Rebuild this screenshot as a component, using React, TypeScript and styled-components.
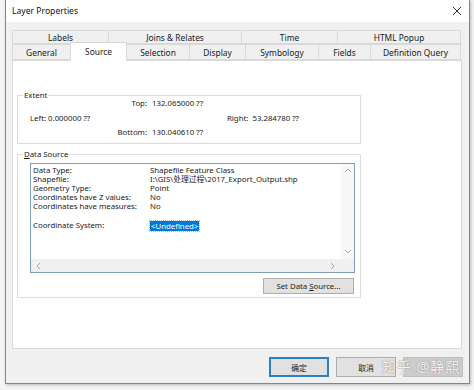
import styled, { createGlobalStyle } from "styled-components";

const GlobalStyle = createGlobalStyle`
  html, body {
    margin: 0;
    padding: 0;
    background: #f5f5f5;
  }
  body {
    font-family: "Noto Sans", "Noto Sans CJK SC", sans-serif;
    font-size: 7.8px;
    color: #1a1a1a;
  }
`;

interface TabDef {
  label: string;
  width: number;
  active?: boolean;
}

const topTabs: TabDef[] = [
  { label: "Labels", width: 97 },
  { label: "Joins & Relates", width: 134 },
  { label: "Time", width: 97 },
  { label: "HTML Popup", width: 124 },
];

const bottomTabs: TabDef[] = [
  { label: "General", width: 59 },
  { label: "Source", width: 57, active: true },
  { label: "Selection", width: 64 },
  { label: "Display", width: 57 },
  { label: "Symbology", width: 74 },
  { label: "Fields", width: 53 },
  { label: "Definition Query", width: 91 },
];

const sourceRows = [
  ["Data Type:", "Shapefile Feature Class"],
  ["Shapefile:", "I:\\GIS\\处理过程\\2017_Export_Output.shp"],
  ["Geometry Type:", "Point"],
  ["Coordinates have Z values:", "No"],
  ["Coordinates have measures:", "No"],
];

const Chevron = ({ dir }: { dir: "up" | "down" | "left" | "right" }) => {
  const d = {
    up: "M1 5 L4 2 L7 5",
    down: "M1 2 L4 5 L7 2",
    left: "M5 1 L2 4 L5 7",
    right: "M2 1 L5 4 L2 7",
  }[dir];
  return (
    <svg width="8" height="8" viewBox="0 0 8 8">
      <path d={d} fill="none" stroke="#a6a6a6" strokeWidth="1" />
    </svg>
  );
};

const App = () => {
  return (
    <Screen>
      <GlobalStyle />
      <Window>
        <TitleBar>
          <Title>Layer Properties</Title>
          <CloseIcon width="10" height="10" viewBox="0 0 10 10">
            <path d="M1 1 L9 9 M9 1 L1 9" stroke="#333" strokeWidth="1" />
          </CloseIcon>
        </TitleBar>
        <Body>
          <TabStrip>
            <TabRow $height={14}>
              {topTabs.map((t) => (
                <Tab key={t.label} $width={t.width}>
                  {t.label}
                </Tab>
              ))}
            </TabRow>
            <TabRow $height={16}>
              {bottomTabs.map((t) => (
                <Tab key={t.label} $width={t.width} $active={t.active}>
                  {t.label}
                </Tab>
              ))}
            </TabRow>
          </TabStrip>
          <Panel>
            <ExtentBox>
              <GroupLabel>Extent</GroupLabel>
              <ExtentGrid>
                <ExtentLabel>Top:</ExtentLabel>
                <ExtentValue>132.065000 ??</ExtentValue>
                <span />
                <span>Left: 0.000000 ??</span>
                <span />
                <ExtentRight>Right:&nbsp; 53.284780 ??</ExtentRight>
                <ExtentLabel>Bottom:</ExtentLabel>
                <ExtentValue>130.040610 ??</ExtentValue>
                <span />
              </ExtentGrid>
            </ExtentBox>
            <SourceBox>
              <GroupLabel>
                <u>D</u>ata Source
              </GroupLabel>
              <ListFrame>
                <ListContent>
                  {sourceRows.map(([k, v]) => (
                    <ListRow key={k}>
                      <ListKey>{k}</ListKey>
                      <span>{v}</span>
                    </ListRow>
                  ))}
                  <ListRow $gap>
                    <ListKey>Coordinate System:</ListKey>
                    <Selected>&lt;Undefined&gt;</Selected>
                  </ListRow>
                </ListContent>
                <VScroll>
                  <Chevron dir="up" />
                  <Chevron dir="down" />
                </VScroll>
                <HScroll>
                  <Chevron dir="left" />
                  <Chevron dir="right" />
                </HScroll>
                <ScrollCorner />
              </ListFrame>
              <SourceActions>
                <Button $width={91} $height={16}>
                  <span>
                    Set Data <u>S</u>ource...
                  </span>
                </Button>
              </SourceActions>
            </SourceBox>
          </Panel>
          <Footer>
            <Button $width={60} $height={20} $default>
              确定
            </Button>
            <Button $width={60} $height={20}>
              取消
            </Button>
            <Button $width={60} $height={20} $disabled />
            <Watermark>知乎 @静熙</Watermark>
          </Footer>
        </Body>
      </Window>
    </Screen>
  );
};

const Screen = styled.div`
  width: 474px;
  height: 390px;
  padding-left: 5px;
  box-sizing: border-box;
  overflow: hidden;
`;

const Window = styled.div`
  width: 465px;
  height: 384px;
  box-sizing: border-box;
  border: 1px solid #858585;
  border-top: none;
  background: #f0f0f0;
  display: flex;
  flex-direction: column;
  box-shadow: 1px 1px 3px rgba(0, 0, 0, 0.25);
`;

const TitleBar = styled.div`
  height: 22px;
  background: #ffffff;
  display: flex;
  align-items: center;
  justify-content: space-between;
  padding: 0 7px 0 6px;
`;

const Title = styled.span`
  font-size: 8.6px;
  color: #111;
`;

const CloseIcon = styled.svg`
  display: block;
`;

const Body = styled.div`
  flex: 1;
  display: flex;
  flex-direction: column;
  padding: 8px 6px 0 6px;
`;

const TabStrip = styled.div`
  display: flex;
  flex-direction: column;
  width: 450px;
`;

const TabRow = styled.div<{ $height: number }>`
  display: flex;
  align-items: flex-end;
  height: ${(p) => p.$height}px;
`;

const Tab = styled.div<{ $width: number; $active?: boolean }>`
  box-sizing: border-box;
  width: ${(p) => p.$width}px;
  height: ${(p) => (p.$active ? "calc(100% + 3px)" : "100%")};
  margin-right: -1px;
  margin-bottom: ${(p) => (p.$active ? "-1px" : "0")};
  border: 1px solid #d9d9d9;
  border-bottom-color: ${(p) => (p.$active ? "#ffffff" : "#d9d9d9")};
  background: ${(p) => (p.$active ? "#ffffff" : "#f0f0f0")};
  position: relative;
  z-index: ${(p) => (p.$active ? 1 : 0)};
  display: flex;
  align-items: center;
  justify-content: center;
  white-space: nowrap;
  font-size: 8.4px;
`;

const Panel = styled.div`
  box-sizing: border-box;
  width: 450px;
  height: 289px;
  background: #ffffff;
  border: 1px solid #d9d9d9;
  padding: 34px 0 0 4px;
`;

const GroupBox = styled.div`
  position: relative;
  box-sizing: border-box;
  width: 344px;
  border: 1px solid #dcdcdc;
`;

const GroupLabel = styled.span`
  position: absolute;
  top: -7px;
  left: 5px;
  padding: 0 1px;
  background: #ffffff;
  line-height: 12px;
`;

const ExtentBox = styled(GroupBox)`
  height: 49px;
`;

const ExtentGrid = styled.div`
  display: grid;
  grid-template-columns: 120px 75px 1fr;
  grid-auto-rows: 14.5px;
  align-items: center;
  padding-left: 12px;
  white-space: nowrap;
`;

const ExtentLabel = styled.span`
  text-align: right;
  padding-right: 3px;
`;

const ExtentValue = styled.span`
  padding-left: 2px;
`;

const ExtentRight = styled.span`
  padding-left: 2px;
`;

const SourceBox = styled(GroupBox)`
  margin-top: 10px;
  padding: 8px 5px 3px 12px;
`;

const ListFrame = styled.div`
  box-sizing: border-box;
  height: 110px;
  border: 1px solid #7f9db9;
  display: grid;
  grid-template-columns: 1fr 13px;
  grid-template-rows: 1fr 13px;
  background: #ffffff;
`;

const ListContent = styled.div`
  padding: 2px 0 0 2px;
  overflow: hidden;
  white-space: nowrap;
`;

const ListRow = styled.div<{ $gap?: boolean }>`
  display: flex;
  line-height: 9px;
  height: 9px;
  margin-top: ${(p) => (p.$gap ? "10px" : "0")};
  align-items: center;
`;

const ListKey = styled.span`
  width: 117px;
  flex-shrink: 0;
`;

const Selected = styled.span`
  background: #0078d7;
  color: #ffffff;
  line-height: 10px;
  padding: 0 1px;
  outline: 1px dotted #8ec2ef;
`;

const VScroll = styled.div`
  background: #f7f7f7;
  display: flex;
  flex-direction: column;
  justify-content: space-between;
  align-items: center;
  padding: 3px 0;
`;

const HScroll = styled.div`
  background: #f0f0f0;
  display: flex;
  justify-content: space-between;
  align-items: center;
  padding: 0 4px;
`;

const ScrollCorner = styled.div`
  background: #f0f0f0;
`;

const SourceActions = styled.div`
  display: flex;
  justify-content: flex-end;
  margin-top: 5px;
  padding-right: 1px;
`;

const Button = styled.div<{
  $width: number;
  $height: number;
  $default?: boolean;
  $disabled?: boolean;
}>`
  box-sizing: border-box;
  width: ${(p) => p.$width}px;
  height: ${(p) => p.$height}px;
  display: flex;
  align-items: center;
  justify-content: center;
  background: ${(p) => (p.$disabled ? "#cccccc" : "#e1e1e1")};
  border: ${(p) =>
    p.$default
      ? "2px solid #2a7fc9"
      : p.$disabled
      ? "1px solid #bfbfbf"
      : "1px solid #adadad"};
  white-space: nowrap;
`;

const Footer = styled.div`
  position: relative;
  display: flex;
  justify-content: flex-end;
  gap: 7px;
  margin-top: 8px;
`;

const Watermark = styled.span`
  position: absolute;
  right: 3px;
  top: -1px;
  font-size: 14px;
  line-height: 22px;
  letter-spacing: 1px;
  color: rgba(255, 255, 255, 0.9);
  text-shadow: 0 0 1px #8f8f8f, 0 0 2px #a8a8a8;
`;

export default App;
